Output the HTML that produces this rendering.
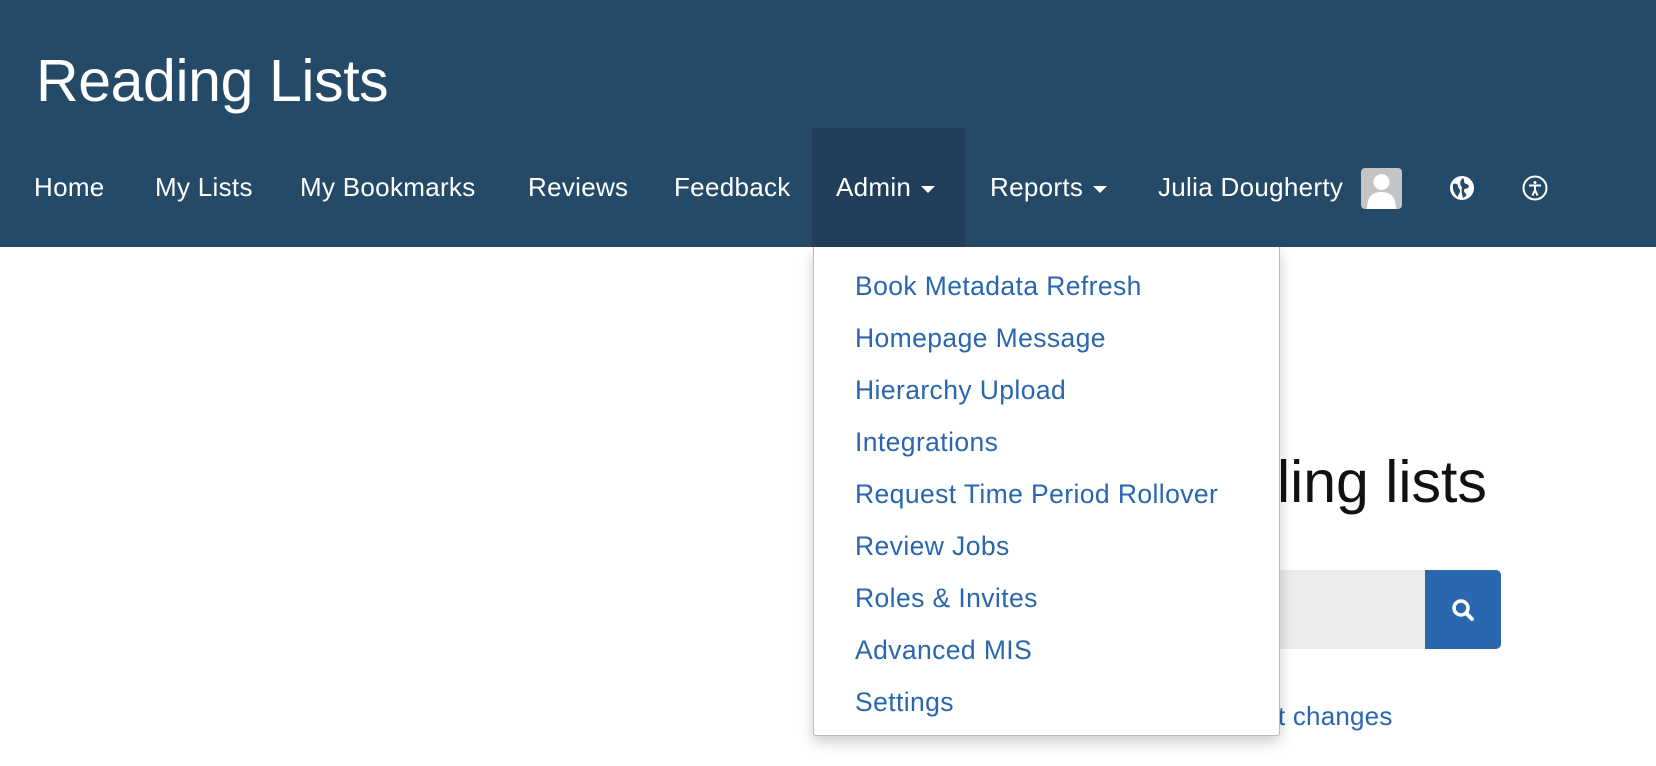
<!DOCTYPE html>
<html><head><meta charset="utf-8"><style>
body{margin:0;width:1656px;height:766px;overflow:hidden;background:#fff;font-family:"Liberation Sans",sans-serif;position:relative}
.hdr{position:absolute;left:0;top:0;width:1656px;height:247px;background:#244a68}
.title{position:absolute;left:36px;top:47px;color:#fff;font-size:59px;letter-spacing:-0.4px}
.nav{position:absolute;top:172px;color:#fff;font-size:26px;white-space:nowrap;letter-spacing:0.3px}
.adm{position:absolute;left:812px;top:128px;width:153px;height:119px;background:#213f5a}
.caret{display:inline-block;width:0;height:0;border-left:7px solid transparent;border-right:7px solid transparent;border-top:7px solid #fff;vertical-align:middle;margin-left:10px}
.dd{position:absolute;left:813px;top:247px;width:465px;height:488px;background:#fff;border:1px solid #bbb;border-top:none;border-radius:0 0 3px 3px;box-shadow:0 6px 14px rgba(0,0,0,.2)}
.dd div{position:absolute;left:41px;color:#2a66ae;font-size:26.5px;white-space:nowrap;letter-spacing:0.4px}
.h{position:absolute;left:1277px;top:448px;font-size:59px;color:#111}
.inp{position:absolute;left:1270px;top:570px;width:156px;height:79px;background:#ebebeb}
.btn{position:absolute;left:1425px;top:570px;width:76px;height:79px;background:#2b67ae;border-radius:0 5px 5px 0}
.ch{position:absolute;left:1278px;top:701px;font-size:26px;color:#2a66ae;letter-spacing:0.2px}
</style></head><body>
<div class="hdr"></div>
<div class="title">Reading Lists</div>
<div class="adm"></div>
<div class="nav" style="left:34px">Home</div>
<div class="nav" style="left:155px">My Lists</div>
<div class="nav" style="left:300px">My Bookmarks</div>
<div class="nav" style="left:528px">Reviews</div>
<div class="nav" style="left:674px">Feedback</div>
<div class="nav" style="left:836px">Admin<span class="caret"></span></div>
<div class="nav" style="left:990px">Reports<span class="caret"></span></div>
<div class="nav" style="left:1158px">Julia Dougherty</div>
<svg style="position:absolute;left:1361px;top:168px" width="41" height="41" viewBox="0 0 41 41"><rect width="41" height="41" rx="4" fill="#c4c4c4"/><circle cx="20.5" cy="14" r="8" fill="#fff"/><path d="M6 41 C6 28 12 24 20.5 24 C29 24 35 28 35 41Z" fill="#fff"/></svg>
<svg style="position:absolute;left:1449px;top:175px" width="26" height="26" viewBox="0 0 26 26"><circle cx="13" cy="13" r="12" fill="#fff"/><path d="M4 9 C6 8 9 9 9 11 C9 13 11 14 11 16 C11 18 9 19 9 22 C6 20 3 15 4 9Z M14 3 C16 5 14 8 17 9 C19 9 21 11 19 13 C17 14 15 13 15 16 C15 18 18 18 17 21 L14 23 C13 19 12 15 13 12 C11 11 10 6 14 3Z" fill="#244a68"/></svg>
<svg style="position:absolute;left:1522px;top:175px" width="26" height="26" viewBox="0 0 26 26" fill="none" stroke="#fff" stroke-width="2"><circle cx="13" cy="13" r="11.5"/><circle cx="13" cy="7.5" r="1.5" fill="#fff" stroke="none"/><path d="M7 10.5 L19 10.5 M13 10.5 L13 15 M13 15 L10.5 20.5 M13 15 L15.5 20.5"/></svg>
<div class="h">ling lists</div>
<div class="inp"></div>
<div class="btn"><svg style="position:absolute;left:25px;top:27px" width="26" height="26" viewBox="0 0 26 26"><circle cx="11" cy="11" r="7" fill="none" stroke="#fff" stroke-width="3.5"/><path d="M16 16 L22 22" stroke="#fff" stroke-width="4" stroke-linecap="round"/></svg></div>
<div class="ch">t changes</div>
<div class="dd">
<div style="top:24px">Book Metadata Refresh</div>
<div style="top:76px">Homepage Message</div>
<div style="top:128px">Hierarchy Upload</div>
<div style="top:180px">Integrations</div>
<div style="top:232px">Request Time Period Rollover</div>
<div style="top:284px">Review Jobs</div>
<div style="top:336px">Roles &amp; Invites</div>
<div style="top:388px">Advanced MIS</div>
<div style="top:440px">Settings</div>
</div>
</body></html>
